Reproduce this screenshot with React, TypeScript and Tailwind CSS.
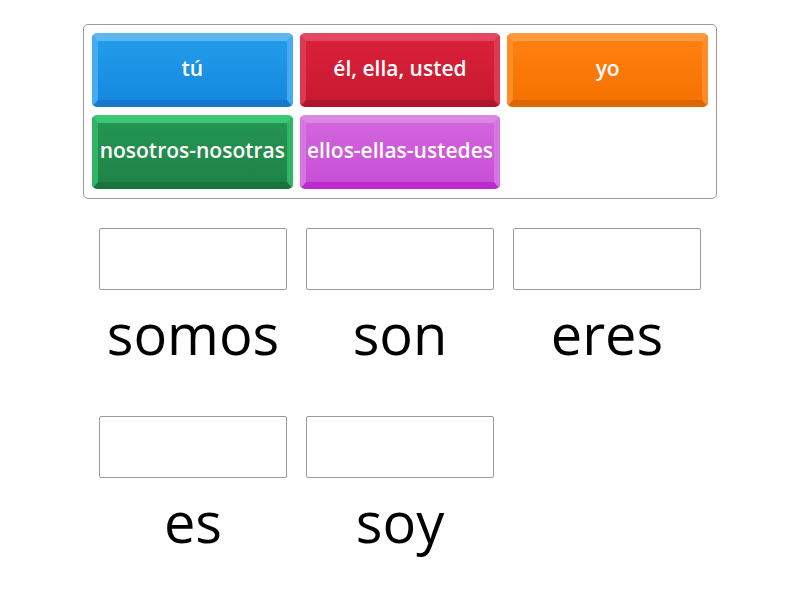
const tiles = [
  {
    label: "tú",
    cls: "border-t-[#5cb8f3] border-x-[#45aaef] border-b-[#1479cc] bg-gradient-to-b from-[#229cea] to-[#1589df]",
  },
  {
    label: "él, ella, usted",
    cls: "border-t-[#e34a61] border-x-[#dc3a52] border-b-[#b0152b] bg-gradient-to-b from-[#da2039] to-[#c71a31]",
  },
  {
    label: "yo",
    cls: "border-t-[#ff9a3e] border-x-[#ff8d28] border-b-[#dd6600] bg-gradient-to-b from-[#ff7f10] to-[#f57200]",
  },
  {
    label: "nosotros-nosotras",
    cls: "border-t-[#3cc775] border-x-[#2fb565] border-b-[#19733c] bg-gradient-to-b from-[#249552] to-[#1f8447]",
  },
  {
    label: "ellos-ellas-ustedes",
    cls: "border-t-[#dc88e3] border-x-[#d677df] border-b-[#bd2ace] bg-gradient-to-b from-[#d264dd] to-[#c84fd6]",
  },
];

const answers = ["somos", "son", "eres", "es", "soy"];

export default function App() {
  return (
    <div className="min-h-screen bg-white pt-[24px] font-['Open_Sans',sans-serif]">
      <div className="mx-auto w-[634px] rounded-[5px] border border-[#9a9a9a] px-[8px] pt-[8px] pb-[9px]">
        <div className="grid grid-cols-3 gap-[7px] gap-y-[8px]">
          {tiles.map((t) => (
            <div
              key={t.label}
              className={`flex h-[74px] items-center justify-center rounded-[5px] border-t-[8px] border-x-[6px] border-b-[7px] text-[21px] font-semibold text-white ${t.cls}`}
            >
              <span className="-mt-[3px] whitespace-nowrap">{t.label}</span>
            </div>
          ))}
        </div>
      </div>

      <div className="mx-auto mt-[29px] grid w-[602px] grid-cols-3 gap-x-[19px] gap-y-[45px]">
        {answers.map((a) => (
          <div key={a} className="flex flex-col items-center">
            <div className="h-[62px] w-[188px] rounded-[2px] border border-[#9a9a9a] bg-white" />
            <div className="mt-[5px] h-[76px] text-[56px] leading-[76px] text-black">{a}</div>
          </div>
        ))}
      </div>
    </div>
  );
}
